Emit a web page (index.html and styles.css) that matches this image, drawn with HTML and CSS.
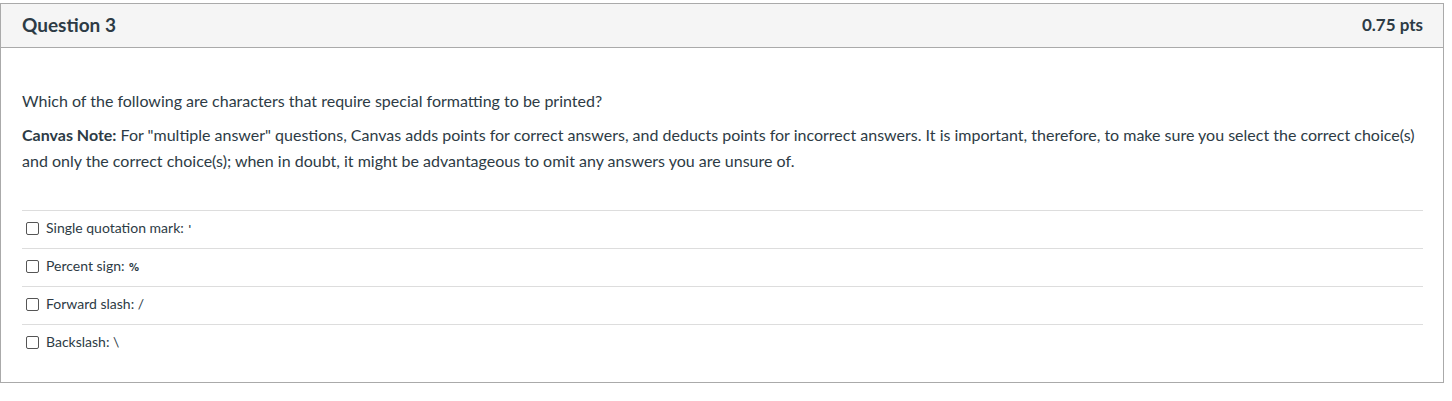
FILE: index.html
```html
<!DOCTYPE html>
<html>
<head>
<meta charset="utf-8">
<link rel="stylesheet" href="styles.css">
</head>
<body>
<div class="question">
  <div class="q-header">
    <span class="q-title">Question 3</span>
    <span class="q-pts">0.75 pts</span>
  </div>
  <div class="q-body">
    <p class="q-text">Which of the following are characters that require special formatting to be printed?</p>
    <p class="q-text"><strong>Canvas Note:</strong> For "multiple answer" questions, Canvas adds points for correct answers, and deducts points for incorrect answers. It is important, therefore, to make sure you select the correct choice(s) and only the correct choice(s); when in doubt, it might be advantageous to omit any answers you are unsure of.</p>
    <div class="answers">
      <label class="answer"><span class="box"></span><span class="a-text">Single quotation mark: <span class="glyph">'</span></span></label>
      <label class="answer"><span class="box"></span><span class="a-text">Percent sign: <span class="glyph">%</span></span></label>
      <label class="answer"><span class="box"></span><span class="a-text">Forward slash: /</span></label>
      <label class="answer"><span class="box"></span><span class="a-text">Backslash: \</span></label>
    </div>
  </div>
</div>
</body>
</html>
```

FILE: styles.css
```css
html, body {
  margin: 0;
  padding: 0;
  background: #fff;
}
body {
  padding-top: 3px;
  font-family: Lato, "Open Sans", sans-serif;
  color: #2d3b45;
}
.question {
  width: 1442px;
  border: 1px solid #aaaaaa;
  box-sizing: content-box;
}
.q-header {
  height: 44px;
  background: #f5f5f5;
  border-bottom: 1px solid #aaaaaa;
  display: flex;
  align-items: center;
  justify-content: space-between;
  padding: 0 20px 2px 21px;
  box-sizing: border-box;
}
.q-title {
  font-weight: bold;
  font-size: 19px;
  color: #2d3b45;
}
.q-pts {
  font-weight: bold;
  font-size: 17px;
  color: #2d3b45;
}
.q-body {
  padding: 40px 20px 20px 21px;
}
.q-text {
  margin: 0 0 8px 0;
  font-size: 16px;
  line-height: 26px;
}
.q-text strong {
  font-weight: bold;
}
.answers {
  margin-top: 36px;
}
.answer {
  display: flex;
  align-items: center;
  height: 38px;
  box-sizing: border-box;
  border-top: 1px solid #dddddd;
  font-size: 14px;
  padding-bottom: 5px;
}
.box {
  width: 11px;
  height: 11px;
  border: 1px solid #555;
  border-radius: 2px;
  margin: 2px 7px 0 4px;
  background: #fff;
  flex: none;
}
.a-text {
  color: #2d3b45;
  font-weight: 400;
}
.glyph {
  font-family: "DejaVu Sans", sans-serif;
  font-size: 10px;
  font-weight: bold;
  margin-left: 1px;
}
```
